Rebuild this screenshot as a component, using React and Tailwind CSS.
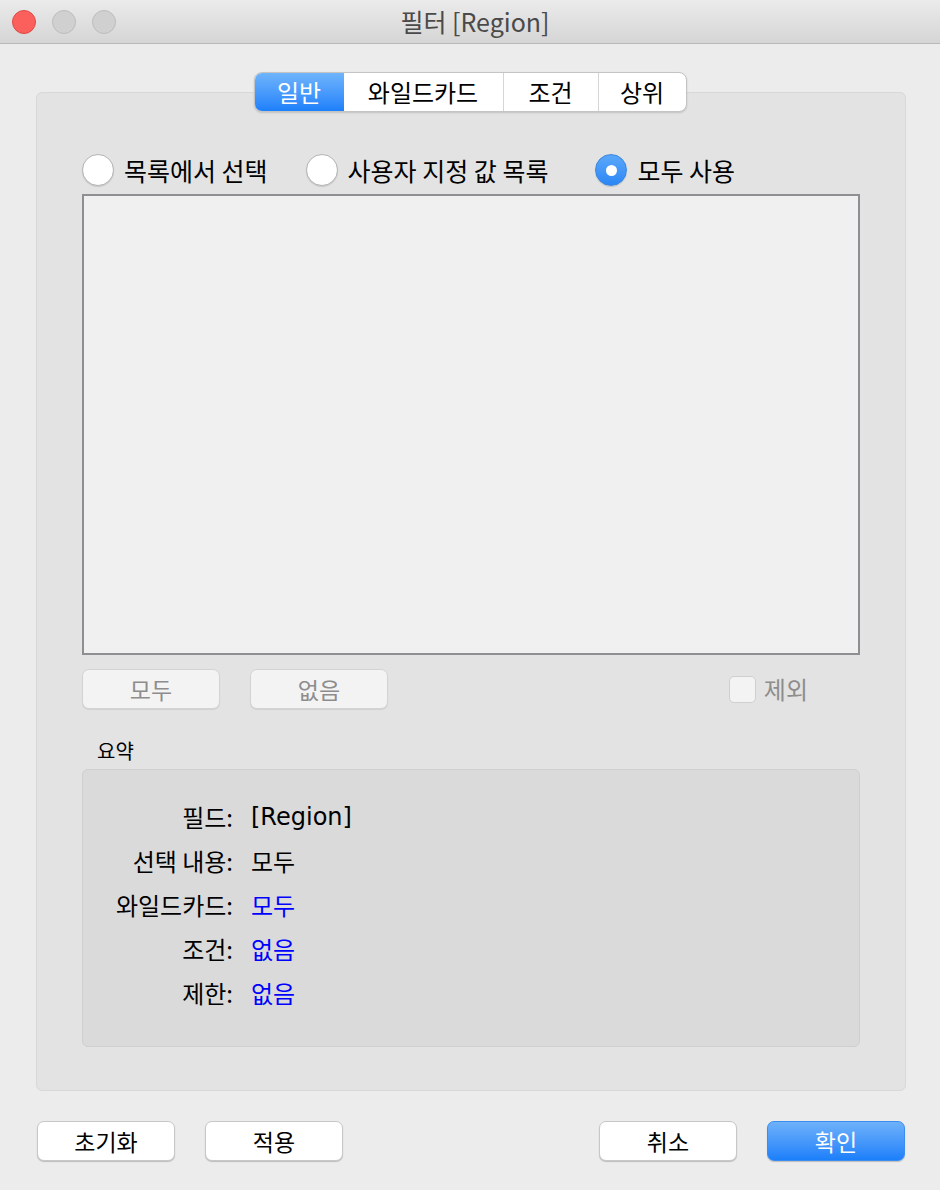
import React from 'react'

const font = { fontFamily: '"Noto Sans CJK KR", "Noto Sans", sans-serif' }

function Radio({ checked, label }) {
  return (
    <div className="flex items-center gap-[10px]">
      {checked ? (
        <div className="w-[32px] h-[32px] rounded-full bg-gradient-to-b from-[#5aa8fa] to-[#2b86f5] border border-[#3a86e0] flex items-center justify-center shadow-[0_1px_1px_rgba(0,0,0,0.15)]">
          <div className="w-[11px] h-[11px] rounded-full bg-white" />
        </div>
      ) : (
        <div className="w-[32px] h-[32px] rounded-full bg-white border border-[#b4b4b4] shadow-[0_1px_1px_rgba(0,0,0,0.12)]" />
      )}
      <span className="text-[25px] leading-none text-black">{label}</span>
    </div>
  )
}

function Button({ children, primary, disabled, className = '' }) {
  const base = 'h-[40px] w-[138px] rounded-[7px] flex items-center justify-center text-[23px] leading-none'
  if (primary)
    return (
      <div className={`${base} bg-gradient-to-b from-[#6db1fa] to-[#1a7ffa] text-white border border-[#3b8ef0] shadow-[0_1px_1px_rgba(0,0,0,0.2)] ${className}`}>
        {children}
      </div>
    )
  if (disabled)
    return (
      <div className={`${base} bg-[#f3f3f3] text-[#8d8d8d] border border-[#d3d3d3] shadow-[0_1px_1px_rgba(0,0,0,0.08)] ${className}`}>
        {children}
      </div>
    )
  return (
    <div className={`${base} bg-white text-black border border-[#c7c7c7] shadow-[0_1px_1px_rgba(0,0,0,0.2)] ${className}`}>
      {children}
    </div>
  )
}

const summary = [
  { label: '필드:', value: '[Region]', blue: false },
  { label: '선택 내용:', value: '모두', blue: false },
  { label: '와일드카드:', value: '모두', blue: true },
  { label: '조건:', value: '없음', blue: true },
  { label: '제한:', value: '없음', blue: true },
]

export default function App() {
  return (
    <div className="w-[940px] h-[1190px] bg-[#ececec] flex flex-col overflow-hidden" style={font}>
      {/* title bar */}
      <div className="h-[44px] bg-gradient-to-b from-[#ebebeb] to-[#d5d5d5] border-b border-[#b9b9b9] flex items-center relative">
        <div className="flex items-center gap-[16px] pl-[12px]">
          <div className="w-[24px] h-[24px] rounded-full bg-[#fc605c] border border-[#de4a45]" />
          <div className="w-[24px] h-[24px] rounded-full bg-[#d0d0d0] border border-[#bdbdbd]" />
          <div className="w-[24px] h-[24px] rounded-full bg-[#d0d0d0] border border-[#bdbdbd]" />
        </div>
        <div className="flex-1 text-center text-[25px] text-[#4a4a4a] pr-[106px]">필터 [Region]</div>
      </div>

      {/* tabs */}
      <div className="mt-[28px] flex justify-center relative z-10">
        <div className="flex h-[40px] rounded-[8px] border border-[#c4c4c4] bg-white shadow-[0_1px_2px_rgba(0,0,0,0.15)] overflow-hidden text-[24px] leading-none">
          <div className="w-[89px] flex items-center justify-center bg-gradient-to-b from-[#6fb4fb] to-[#1c80fb] text-white">일반</div>
          <div className="w-[160px] flex items-center justify-center border-r border-[#d5d5d5] text-black">와일드카드</div>
          <div className="w-[95px] flex items-center justify-center border-r border-[#d5d5d5] text-black">조건</div>
          <div className="w-[87px] flex items-center justify-center text-black">상위</div>
        </div>
      </div>

      {/* panel */}
      <div className="ml-[36px] mr-[34px] -mt-[20px] h-[999px] bg-[#e3e3e3] border border-[#d8d8d8] rounded-[6px] pt-[61px] px-[45px] flex flex-col">
        <div className="flex items-center h-[32px]">
          <Radio label="목록에서 선택" />
          <div className="ml-[38px]"><Radio label="사용자 지정 값 목록" /></div>
          <div className="ml-[47px]"><Radio checked label="모두 사용" /></div>
        </div>

        <div className="mt-[8px] h-[461px] bg-[#f0f0f0] border-2 border-[#8e8e93]" />

        <div className="mt-[14px] flex items-center">
          <Button disabled>모두</Button>
          <Button disabled className="ml-[30px]">없음</Button>
          <div className="ml-auto flex items-center gap-[8px] mr-[52px]">
            <div className="w-[27px] h-[27px] rounded-[5px] bg-[#f3f3f3] border border-[#cfcfcf]" />
            <span className="text-[24px] leading-none text-[#8d8d8d]">제외</span>
          </div>
        </div>

        <div className="mt-[32px] ml-[15px] text-[20px] leading-none text-black">요약</div>

        <div className="mt-[8px] h-[278px] bg-[#dadada] border border-[#cfcfcf] rounded-[6px] pt-[32px] flex flex-col gap-[14px]">
          {summary.map((row) => (
            <div key={row.label} className="flex items-center h-[30px] text-[24px] leading-none">
              <div className="w-[150px] text-right text-black">{row.label}</div>
              <div
                className={`ml-[18px] ${row.blue ? 'text-[#0000ff]' : 'text-black'}`}
                style={row.value.startsWith('[') ? { fontFamily: '"DejaVu Sans", "Noto Sans", sans-serif' } : undefined}
              >
                {row.value}
              </div>
            </div>
          ))}
        </div>
      </div>

      {/* footer */}
      <div className="mt-[30px] flex items-center pl-[37px] pr-[35px]">
        <Button>초기화</Button>
        <Button className="ml-[30px]">적용</Button>
        <Button className="ml-auto">취소</Button>
        <Button primary className="ml-[30px]">확인</Button>
      </div>
    </div>
  )
}
